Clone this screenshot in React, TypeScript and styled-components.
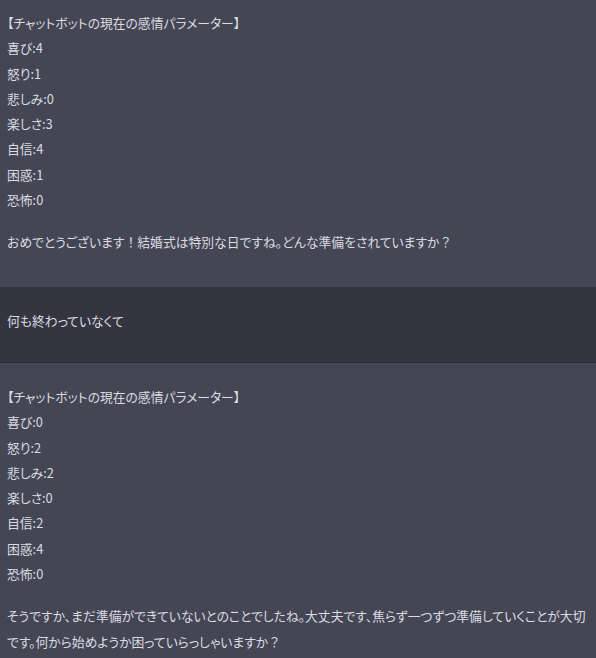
import React from 'react';
import styled, { createGlobalStyle } from 'styled-components';

const GlobalStyle = createGlobalStyle`
  html, body {
    margin: 0;
    padding: 0;
    background-color: #444654;
  }
  body {
    font-family: "Noto Sans CJK JP", "Noto Sans", sans-serif;
  }
`;

const Thread = styled.div`
  display: flex;
  flex-direction: column;
  width: 596px;
  overflow: hidden;
`;

const Message = styled.div<{ $user?: boolean; $padTop?: number }>`
  background-color: ${(p) => (p.$user ? '#343541' : '#444654')};
  border-bottom: ${(p) => (p.$user ? '1px solid #2a2b33' : 'none')};
  padding: ${(p) => p.$padTop ?? 21}px 6px ${(p) => (p.$user ? 29 : 32)}px 7px;
  color: #d9dce2;
  font-size: 12.8px;
  line-height: 25.3px;
  font-feature-settings: "palt";
`;

const Params = styled.div`
  display: flex;
  flex-direction: column;
  margin-bottom: 17px;
`;

const Line = styled.div`
  white-space: nowrap;
`;

const Text = styled.p`
  margin: 0;
`;

// full-width marks keep their em box, as in the original rendering
const Wide = styled.span`
  font-feature-settings: normal;
`;

const withWideMarks = (s: string) =>
  s.split(/([！？])/).map((part, i) =>
    part === '！' || part === '？' ? <Wide key={i}>{part}</Wide> : part
  );

type Emotion = { label: string; value: number };

const ParamBlock = ({ items }: { items: Emotion[] }) => (
  <Params>
    <Line>【チャットボットの現在の感情パラメーター】</Line>
    {items.map((e) => (
      <Line key={e.label}>
        {e.label}:{e.value}
      </Line>
    ))}
  </Params>
);

const first: Emotion[] = [
  { label: '喜び', value: 4 },
  { label: '怒り', value: 1 },
  { label: '悲しみ', value: 0 },
  { label: '楽しさ', value: 3 },
  { label: '自信', value: 4 },
  { label: '困惑', value: 1 },
  { label: '恐怖', value: 0 },
];

const second: Emotion[] = [
  { label: '喜び', value: 0 },
  { label: '怒り', value: 2 },
  { label: '悲しみ', value: 2 },
  { label: '楽しさ', value: 0 },
  { label: '自信', value: 2 },
  { label: '困惑', value: 4 },
  { label: '恐怖', value: 0 },
];

export default function App() {
  return (
    <>
      <GlobalStyle />
      <Thread>
        <Message $padTop={10}>
          <ParamBlock items={first} />
          <Text>{withWideMarks('おめでとうございます！結婚式は特別な日ですね。どんな準備をされていますか？')}</Text>
        </Message>
        <Message $user>
          <Text>何も終わっていなくて</Text>
        </Message>
        <Message>
          <ParamBlock items={second} />
          <Text>
            {withWideMarks(
              'そうですか、まだ準備ができていないとのことでしたね。大丈夫です、焦らず一つずつ準備していくことが大切です。何から始めようか困っていらっしゃいますか？'
            )}
          </Text>
        </Message>
      </Thread>
    </>
  );
}
